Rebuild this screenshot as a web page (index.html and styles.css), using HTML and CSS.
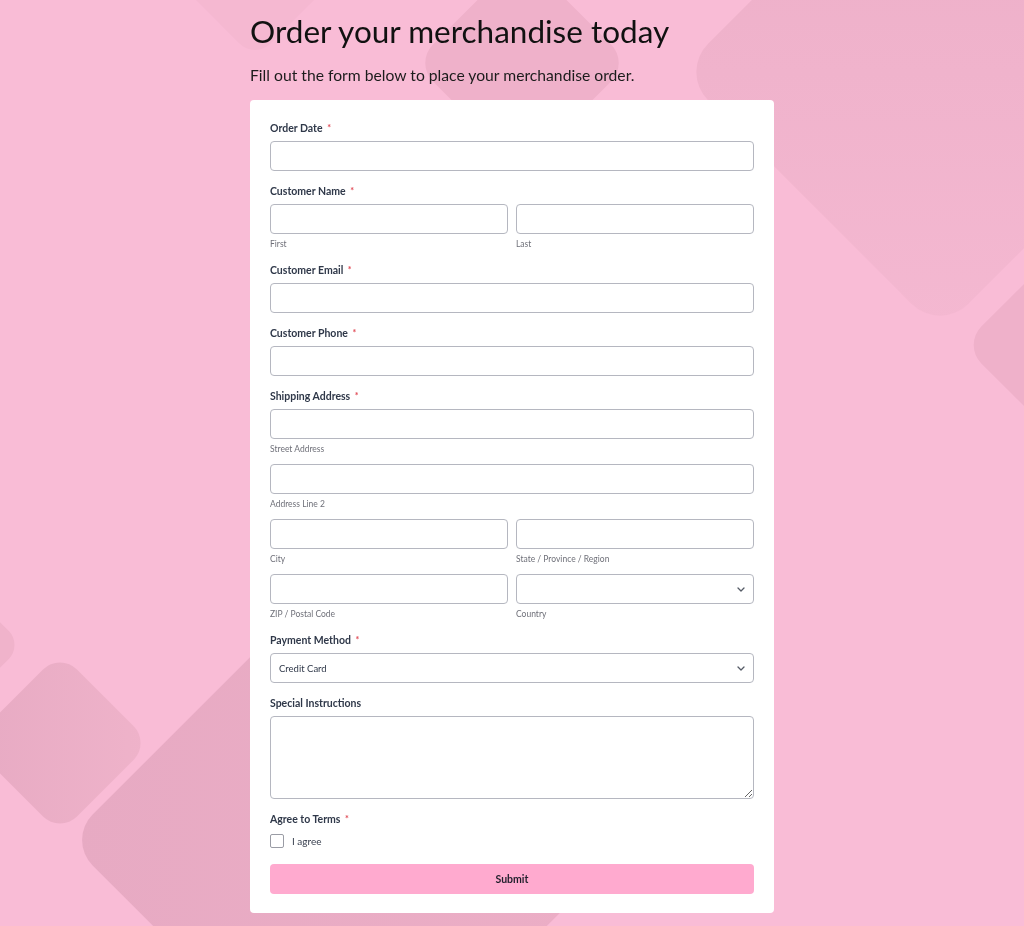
FILE: index.html
```html
<!DOCTYPE html>
<html lang="en">
<head>
<meta charset="utf-8">
<title>Order your merchandise today</title>
<link rel="stylesheet" href="styles.css">
</head>
<body>
<div class="bg" aria-hidden="true">
  <div class="shape s-tl"></div>
  <div class="shape s-tm"></div>
  <div class="shape s-tr"></div>
  <div class="shape s-r"></div>
  <div class="shape s-l"></div>
  <div class="shape s-bl"></div>
  <div class="shape s-b"></div>
</div>
<main class="page">
  <h1 class="title">Order your merchandise today</h1>
  <p class="subtitle">Fill out the form below to place your merchandise order.</p>
  <form class="card">
    <div class="field">
      <label class="label">Order Date <span class="req">*</span></label>
      <input class="input" type="text">
    </div>
    <div class="field">
      <label class="label">Customer Name <span class="req">*</span></label>
      <div class="grid2">
        <div class="sub"><input class="input" type="text"><span class="hint">First</span></div>
        <div class="sub"><input class="input" type="text"><span class="hint">Last</span></div>
      </div>
    </div>
    <div class="field">
      <label class="label">Customer Email <span class="req">*</span></label>
      <input class="input" type="text">
    </div>
    <div class="field">
      <label class="label">Customer Phone <span class="req">*</span></label>
      <input class="input" type="text">
    </div>
    <div class="field">
      <label class="label">Shipping Address <span class="req">*</span></label>
      <div class="addr">
        <div class="sub"><input class="input" type="text"><span class="hint">Street Address</span></div>
        <div class="sub"><input class="input" type="text"><span class="hint">Address Line 2</span></div>
        <div class="grid2">
          <div class="sub"><input class="input" type="text"><span class="hint">City</span></div>
          <div class="sub"><input class="input" type="text"><span class="hint">State / Province / Region</span></div>
        </div>
        <div class="grid2">
          <div class="sub"><input class="input" type="text"><span class="hint">ZIP / Postal Code</span></div>
          <div class="sub">
            <div class="select-wrap">
              <select class="input select"><option></option></select>
              <svg class="chev" width="8" height="5" viewBox="0 0 8 5"><path d="M1 1l3 3 3-3" fill="none" stroke="#555b66" stroke-width="1.3" stroke-linecap="round" stroke-linejoin="round"/></svg>
            </div>
            <span class="hint">Country</span>
          </div>
        </div>
      </div>
    </div>
    <div class="field">
      <label class="label">Payment Method <span class="req">*</span></label>
      <div class="select-wrap">
        <select class="input select"><option>Credit Card</option></select>
        <svg class="chev" width="8" height="5" viewBox="0 0 8 5"><path d="M1 1l3 3 3-3" fill="none" stroke="#555b66" stroke-width="1.3" stroke-linecap="round" stroke-linejoin="round"/></svg>
      </div>
    </div>
    <div class="field">
      <label class="label">Special Instructions</label>
      <textarea class="input textarea"></textarea>
    </div>
    <div class="field">
      <label class="label">Agree to Terms <span class="req">*</span></label>
      <label class="check"><input type="checkbox" class="box"><span>I agree</span></label>
    </div>
    <button type="button" class="submit">Submit</button>
  </form>
</main>
</body>
</html>
```

FILE: styles.css
```css
* { box-sizing: border-box; }

html, body {
  margin: 0;
  height: 100%;
}

body {
  background: #f9bcd6;
  font-family: Lato, "Noto Sans", sans-serif;
  overflow: hidden;
  position: relative;
}

.bg {
  position: fixed;
  inset: 0;
  overflow: hidden;
  z-index: 0;
}

.shape {
  position: absolute;
  transform: rotate(45deg);
}

.s-tl {
  left: 185px; top: -110px; width: 140px; height: 140px;
  border-radius: 22px;
  background: #f5b8d1;
}
.s-tm {
  left: 446px; top: -13px; width: 152px; height: 152px;
  border-radius: 26px;
  background: #efb1ca;
}
.s-tr {
  left: 756px; top: -112px; width: 368px; height: 368px;
  border-radius: 40px;
  background: linear-gradient(135deg, #ecaec7 0%, #f4b8d1 100%);
}
.s-r {
  left: 994px; top: 270px; width: 150px; height: 150px;
  border-radius: 26px;
  background: #efb1ca;
}
.s-l {
  left: -110px; top: 590px; width: 110px; height: 110px;
  border-radius: 20px;
  background: #f0b3cb;
}
.s-bl {
  left: -4px; top: 679px; width: 128px; height: 128px;
  border-radius: 24px;
  background: linear-gradient(225deg, #efb3ca 0%, #e7aac3 100%);
}
.s-b {
  left: 150px; top: 640px; width: 400px; height: 400px;
  border-radius: 36px;
  background: linear-gradient(225deg, #ecaec6 0%, #e7aac3 100%);
}

.page {
  position: relative;
  z-index: 1;
  width: 524px;
  margin: 0 auto;
  padding-top: 12px;
}

.title {
  margin: 0;
  font-size: 31.5px;
  line-height: 38px;
  font-weight: 400;
  color: #111;
}

.subtitle {
  margin: 13px 0 0;
  font-size: 15.7px;
  line-height: 24px;
  color: #1c1c1c;
}

.card {
  margin-top: 13px;
  background: #fff;
  border-radius: 4px;
  padding: 21px 20px 19px;
}

.field {
  margin-bottom: 13px;
}

.label {
  display: block;
  font-size: 10.5px;
  line-height: 14px;
  font-weight: 700;
  color: #2f3849;
  margin-bottom: 6px;
}

.req {
  color: #e04a55;
  font-size: 9px;
  margin-left: 2px;
  vertical-align: 1px;
}

.input {
  display: block;
  width: 100%;
  height: 30px;
  border: 1px solid #b5b7c0;
  border-radius: 4px;
  background: #fff;
  font-family: inherit;
  font-size: 9.5px;
  color: #2f3849;
  padding: 0 8px;
  margin: 0;
  outline: none;
}

.grid2 {
  display: grid;
  grid-template-columns: 1fr 1fr;
  gap: 8px;
}

.sub {
  display: flex;
  flex-direction: column;
}

.hint {
  margin-top: 4px;
  font-size: 8.5px;
  line-height: 12px;
  color: #6f7079;
}

.addr {
  display: flex;
  flex-direction: column;
  gap: 9px;
}

.select-wrap {
  position: relative;
}

.select {
  appearance: none;
  -webkit-appearance: none;
  padding-right: 24px;
}

.chev {
  position: absolute;
  right: 9px;
  top: 13px;
  pointer-events: none;
}

.textarea {
  height: 83px;
  resize: vertical;
  padding: 6px 8px;
}

.check {
  display: flex;
  align-items: center;
  gap: 8px;
  margin-top: 8px;
  font-size: 10px;
  color: #3a4150;
}

.box {
  appearance: none;
  -webkit-appearance: none;
  width: 14px;
  height: 14px;
  margin: 0;
  border: 1px solid #9a9ca5;
  border-radius: 2px;
  background: #fff;
}

.submit {
  display: block;
  width: 100%;
  height: 30px;
  margin-top: 16px;
  border: 0;
  border-radius: 4px;
  background: #ffaacf;
  font-family: inherit;
  font-size: 10.5px;
  font-weight: 700;
  color: #1f1f2b;
}
```
